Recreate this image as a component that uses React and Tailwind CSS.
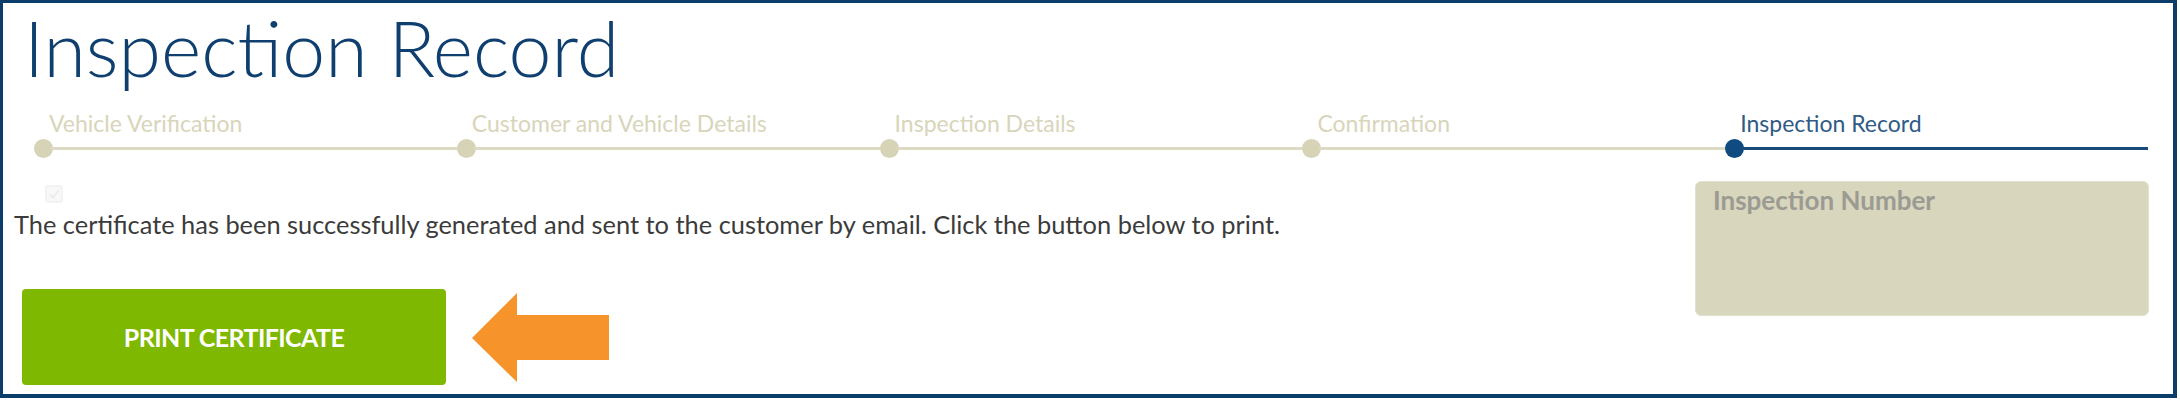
import React from 'react';

const steps = [
  { label: 'Vehicle Verification', active: false },
  { label: 'Customer and Vehicle Details', active: false },
  { label: 'Inspection Details', active: false },
  { label: 'Confirmation', active: false },
  { label: 'Inspection Record', active: true },
];

function Step({ label, active }) {
  return (
    <div className="flex flex-col">
      <div
        className={`pl-[15px] text-[23px] leading-none h-[23px] ${
          active ? 'text-[#2f5b86]' : 'text-[#d8d5bb]'
        }`}
      >
        {label}
      </div>
      <div className="flex items-center mt-[4px] h-[19px]">
        <div
          className={`w-[19px] h-[19px] rounded-full shrink-0 ${
            active ? 'bg-[#0f4a80]' : 'bg-[#d6d3b7]'
          }`}
        />
        <div className={`flex-1 h-[3px] -ml-[2px] ${active ? 'bg-[#184b7b]' : 'bg-[#dcdac2]'}`} />
      </div>
    </div>
  );
}

function ArrowLeft() {
  return (
    <svg width="137" height="89" viewBox="0 0 137 89">
      <polygon points="0,45 45,0 45,22 137,22 137,67 45,67 45,89" fill="#f7932b" />
    </svg>
  );
}

export default function App() {
  return (
    <div className="w-[2180px] h-[400px] bg-white font-['Lato','Liberation_Sans',sans-serif]">
      <div className="w-[2177px] h-[398px] border-[3px] border-r-[4px] border-b-[4px] border-[#0b3d6b] flex flex-col">
        <h1 className="pl-[21px] mt-[6px] text-[77px] leading-none font-light text-[#0e3f6f]">
          Inspection Record
        </h1>

        {/* progress steps */}
        <div className="grid grid-cols-5 w-[2114px] ml-[31px] mt-[26px]">
          {steps.map((s) => (
            <Step key={s.label} {...s} />
          ))}
        </div>

        <div className="flex justify-between flex-1">
          <div className="flex flex-col pl-[11px]">
            <svg className="ml-[31px] mt-[27px]" width="18" height="18" viewBox="0 0 18 18">
              <rect x="1" y="1" width="16" height="16" rx="2" fill="#f8f8f8" stroke="#f0f0f0" strokeWidth="1.5" />
              <path d="M5 9.5 L8 12.5 L13.5 5.5" fill="none" stroke="#ebebeb" strokeWidth="1.8" />
            </svg>
            <p className="mt-[9px] text-[25.4px] leading-none text-[#3b3b3b]">
              The certificate has been successfully generated and sent to the customer by email. Click the button below to print.
            </p>
            <div className="flex items-center mt-[52px] ml-[8px] gap-[26px]">
              <button className="w-[424px] h-[96px] rounded-[4px] bg-[#7fb800] text-white font-bold text-[25px] tracking-[-0.6px]">
                PRINT CERTIFICATE
              </button>
              <ArrowLeft />
            </div>
          </div>

          <div className="mt-[23px] mr-[24px] w-[454px] h-[135px] rounded-[6px] bg-[#d8d6bc] border border-[#e2e1d0] px-[17px] pt-[5px]">
            <div className="text-[26px] font-bold leading-none text-[#9b9b93]">Inspection Number</div>
          </div>
        </div>
      </div>
    </div>
  );
}
